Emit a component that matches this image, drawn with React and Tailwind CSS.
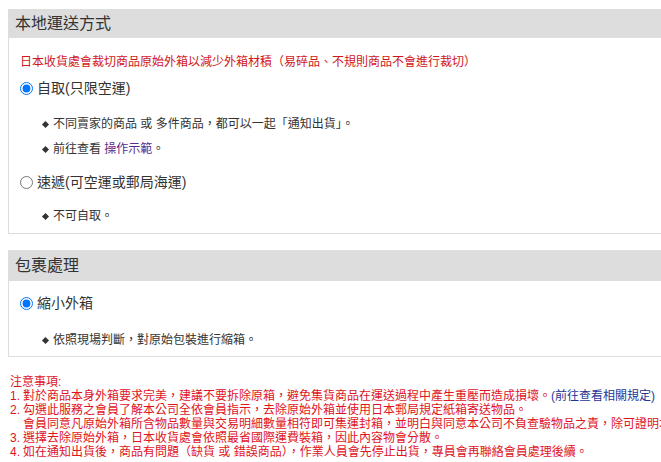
import { useState } from 'react';

const font = { fontFamily: '"Liberation Sans", "Noto Sans CJK TC", sans-serif' };

function Bullet({ children, className = '' }) {
  return (
    <div className={`flex items-center h-[18px] pl-[34px] text-[12px] leading-[18px] text-[#333] ${className}`}>
      <span className="w-[5px] h-[5px] rotate-45 bg-[#333] mr-[5px]" />
      <span>{children}</span>
    </div>
  );
}

function Radio({ name, checked, onChange, label, className = '' }) {
  return (
    <label className={`flex items-center h-[20px] pl-[11px] text-[14px] leading-[20px] text-[#333] ${className}`}>
      <input
        type="radio"
        name={name}
        checked={checked}
        onChange={onChange}
        className="w-[13px] h-[13px] m-0 mr-[4px] accent-[#0075ff]"
      />
      <span>{label}</span>
    </label>
  );
}

export default function App() {
  const [delivery, setDelivery] = useState('pickup');
  const [pack, setPack] = useState(true);

  return (
    <div className="w-[661px] h-[462px] overflow-hidden bg-white" style={font}>
      <div className="pt-[9px] pl-[8px] w-[700px]">
        {/* 本地運送方式 */}
        <div className="border border-[#dddddd]">
          <div className="h-[28px] bg-[#dddddd] pl-[6px] text-[16px] leading-[28px] text-[#333]">本地運送方式</div>
          <div className="text-[12px] leading-[18px] text-[#d0151b] mt-[15px] pl-[11px]">
            日本收貨處會裁切商品原始外箱以減少外箱材積（易碎品、不規則商品不會進行裁切）
          </div>
          <Radio
            name="delivery"
            checked={delivery === 'pickup'}
            onChange={() => setDelivery('pickup')}
            label="自取(只限空運)"
            className="mt-[7px]"
          />
          <Bullet className="mt-[17px]">不同賣家的商品 或 多件商品，都可以一起「通知出貨」。</Bullet>
          <Bullet className="mt-[7px]">
            前往查看 <a className="text-[#5a2a8c]">操作示範</a>。
          </Bullet>
          <Radio
            name="delivery"
            checked={delivery === 'express'}
            onChange={() => setDelivery('express')}
            label="速遞(可空運或郵局海運)"
            className="mt-[14px]"
          />
          <Bullet className="mt-[15px] mb-[8px]">不可自取。</Bullet>
        </div>

        {/* 包裹處理 */}
        <div className="border border-[#dddddd] mt-[16px]">
          <div className="h-[30px] bg-[#dddddd] pl-[6px] text-[16px] leading-[30px] text-[#333]">包裹處理</div>
          <Radio name="pack" checked={pack} onChange={() => setPack(true)} label="縮小外箱" className="mt-[12px]" />
          <Bullet className="mt-[18px] mb-[7px]">依照現場判斷，對原始包裝進行縮箱。</Bullet>
        </div>
      </div>

      {/* 注意事項 */}
      <div className="mt-[18px] pl-[10px] text-[12px] leading-[14px] text-[#e0141e] whitespace-nowrap">
        <div>注意事項:</div>
        <div className="flex">
          <span className="w-[13px] shrink-0">1.</span>
          <span>
            對於商品本身外箱要求完美，建議不要拆除原箱，避免集貨商品在運送過程中產生重壓而造成損壞。
            <a className="text-[#1f3596]">(前往查看相關規定)</a>
          </span>
        </div>
        <div className="flex">
          <span className="w-[13px] shrink-0">2.</span>
          <span>
            勾選此服務之會員了解本公司全依會員指示，去除原始外箱並使用日本郵局規定紙箱寄送物品。
            <br />
            會員同意凡原始外箱所含物品數量與交易明細數量相符即可集運封箱，並明白與同意本公司不負查驗物品之責，除可證明本公司之過失。
          </span>
        </div>
        <div className="flex">
          <span className="w-[13px] shrink-0">3.</span>
          <span>選擇去除原始外箱，日本收貨處會依照最省國際運費裝箱，因此內容物會分散。</span>
        </div>
        <div className="flex">
          <span className="w-[13px] shrink-0">4.</span>
          <span>如在通知出貨後，商品有問題（缺貨 或 錯誤商品），作業人員會先停止出貨，專員會再聯絡會員處理後續。</span>
        </div>
      </div>
    </div>
  );
}
